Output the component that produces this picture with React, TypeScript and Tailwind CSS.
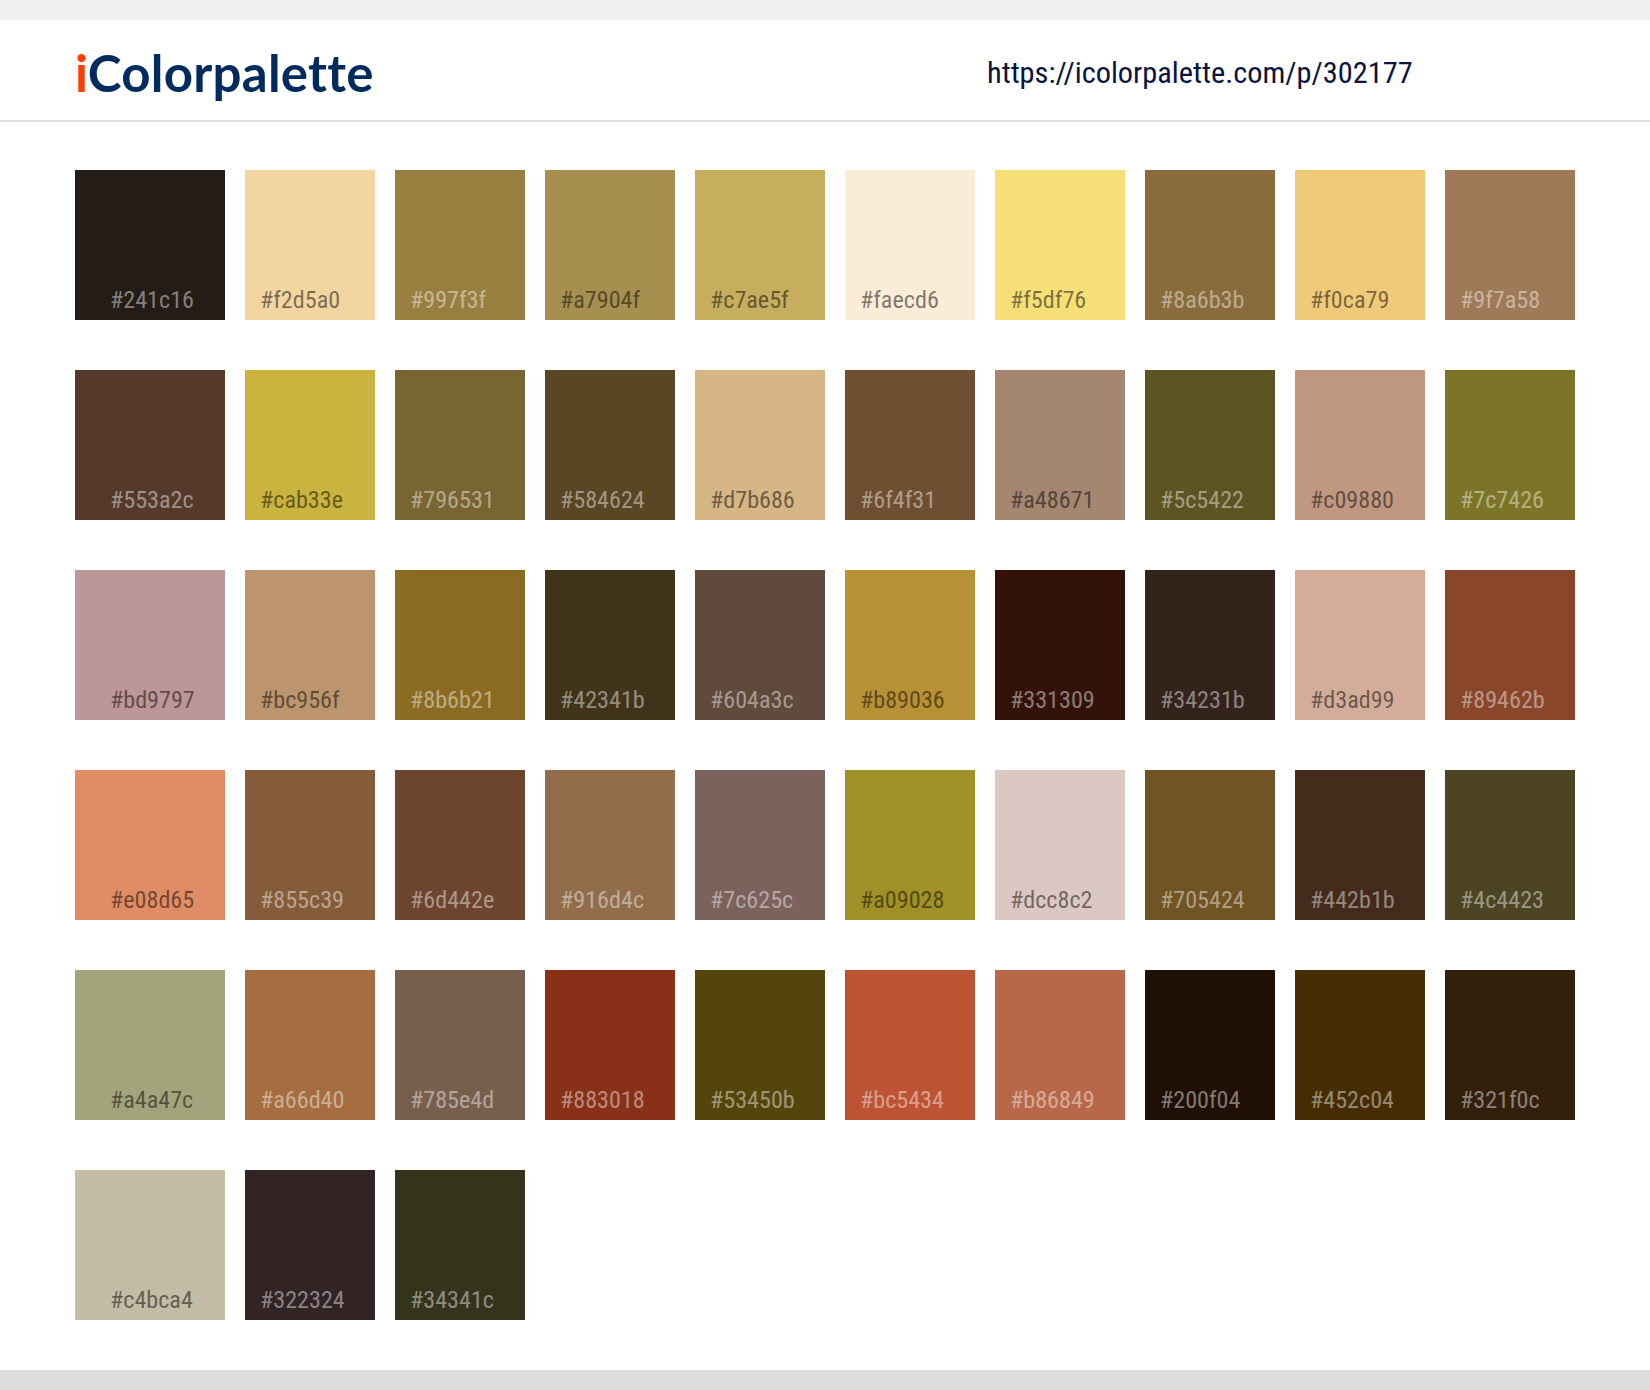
const rows: string[][] = [
  ["241c16", "f2d5a0", "997f3f", "a7904f", "c7ae5f", "faecd6", "f5df76", "8a6b3b", "f0ca79", "9f7a58"],
  ["553a2c", "cab33e", "796531", "584624", "d7b686", "6f4f31", "a48671", "5c5422", "c09880", "7c7426"],
  ["bd9797", "bc956f", "8b6b21", "42341b", "604a3c", "b89036", "331309", "34231b", "d3ad99", "89462b"],
  ["e08d65", "855c39", "6d442e", "916d4c", "7c625c", "a09028", "dcc8c2", "705424", "442b1b", "4c4423"],
  ["a4a47c", "a66d40", "785e4d", "883018", "53450b", "bc5434", "b86849", "200f04", "452c04", "321f0c"],
  ["c4bca4", "322324", "34341c"],
];

// light swatches get dark label, dark ones get light label
function isLight(hex: string) {
  const r = parseInt(hex.slice(0, 2), 16);
  const g = parseInt(hex.slice(2, 4), 16);
  const b = parseInt(hex.slice(4, 6), 16);
  return (r * 299 + g * 587 + b * 114) / 1000 > 130;
}

function Swatch({ hex, first }: { hex: string; first: boolean }) {
  return (
    <div
      className={`flex h-[150px] items-end pb-[2px] ${first ? "pl-[35px]" : "pl-[15px]"}`}
      style={{ backgroundColor: `#${hex}` }}
    >
      <span className={`text-[24.15px] leading-[36px] [font-stretch:75%] ${isLight(hex) ? "text-black/50" : "text-white/45"}`}>
        #{hex}
      </span>
    </div>
  );
}

export default function App() {
  return (
    <div className="flex min-h-[1390px] flex-col bg-white font-['Roboto',sans-serif]">
      <div className="h-[20px] bg-[#f0f0f0]" />
      <header className="flex h-[102px] items-center border-b-2 border-[#e2e2e2] pl-[75px]">
        <div className="w-[912px] pt-[4px] font-['Lato',sans-serif] text-[51px] font-bold leading-none tracking-[0.25px] text-[#002b5f]">
          <span className="text-[#ff3d00]">i</span>Colorpalette
        </div>
        <div className="pt-[5px] text-[30.35px] [font-stretch:75%] text-[#0a1440]">https://icolorpalette.com/p/302177</div>
      </header>
      <main className="flex flex-1 flex-col gap-[50px] pl-[75px] pt-[48px]">
        {rows.map((row) => (
          <div key={row[0]} className="grid grid-cols-[150px_repeat(9,130px)] gap-x-[20px]">
            {row.map((hex, i) => (
              <Swatch key={hex} hex={hex} first={i === 0} />
            ))}
          </div>
        ))}
      </main>
      <div className="h-[20px] bg-[#dcdcdc]" />
    </div>
  );
}
